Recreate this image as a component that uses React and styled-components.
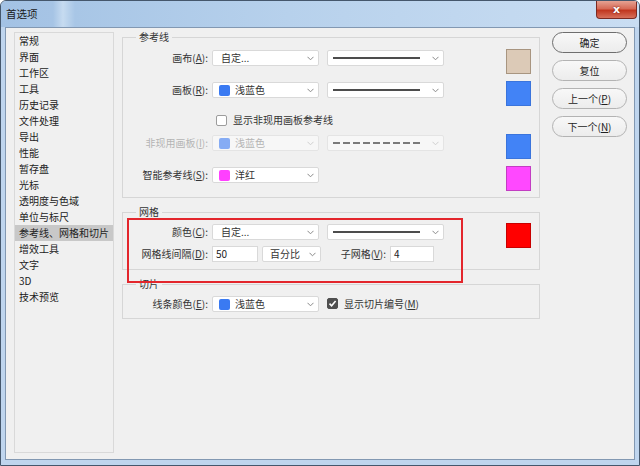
import React from 'react';
import styled, { createGlobalStyle } from 'styled-components';

const Global = createGlobalStyle`
  html, body { margin: 0; padding: 0; background: #fff; }
  body {
    font-family: "Noto Sans CJK SC", "Noto Sans", sans-serif;
    font-size: 10px;
    color: #333;
  }
  * { box-sizing: border-box; }
`;

const Window = styled.div`
  width: 640px;
  height: 466px;
  display: flex;
  flex-direction: column;
  border: 1px solid #45576c;
  border-radius: 6px 6px 0 0;
  background: #bfd5ee;
  overflow: hidden;
`;

const TitleBar = styled.div`
  height: 26px;
  flex: none;
  display: flex;
  justify-content: space-between;
  align-items: flex-start;
  padding: 0 2px 0 5px;
  background: linear-gradient(90deg, #a3c2e4 0, #a6c4e5 52px, #c6dbf0 62px, #a8c6e6 74px, #b7d1ec 45%, #c3d9f0 80%, #c9ddf2 100%);
`;

const Title = styled.div`
  font-size: 10.5px;
  line-height: 26px;
  color: #1a1a1a;
`;

const CloseButton = styled.div`
  width: 41px;
  height: 18px;
  display: flex;
  align-items: center;
  justify-content: center;
  border: 1px solid #7b2a22;
  border-top: none;
  border-radius: 0 0 4px 4px;
  background: linear-gradient(#e6a293 0, #d66a56 45%, #c1361f 55%, #d7705a 100%);
  color: #fff;
  font-family: "DejaVu Sans", sans-serif;
  font-weight: bold;
  font-size: 11px;
  text-shadow: 0 0 2px #6a1a10;
`;

const Frame = styled.div`
  flex: 1;
  display: flex;
  padding: 0 4px 5px;
`;

const Body = styled.div`
  flex: 1;
  display: flex;
  align-items: flex-start;
  background: #f0f0f0;
  border: 1px solid #8298b2;
  padding: 0 6px 6px 8px;
`;

const Sidebar = styled.div`
  align-self: stretch;
  width: 100px;
  margin-top: 4px;
  border: 1px solid #d9d9d9;
  display: flex;
  flex-direction: column;
`;

const NavItem = styled.div`
  height: 16px;
  line-height: 16px;
  padding-left: 4px;
  color: #222;
  background: ${p => (p.$active ? '#c8c8c8' : 'transparent')};
`;

const Main = styled.div`
  position: relative;
  width: 418px;
  margin: 1px 0 0 8px;
  display: flex;
  flex-direction: column;
  gap: 6px;
`;

const Group = styled.fieldset`
  margin: 0;
  min-width: 0;
  border: 1px solid #d6d6d6;
  padding: ${p => p.$pt}px 8px 6px 0;
`;

const Legend = styled.legend`
  margin-left: 13px;
  padding: 0 3px;
  line-height: 16px;
  font-size: 10px;
  color: #333;
`;

const Rows = styled.div`
  display: flex;
  flex-direction: column;
  gap: 7px;
`;

const Row = styled.div`
  display: flex;
  align-items: flex-start;
  height: ${p => p.$h || 16}px;
`;

const Label = styled.div`
  width: ${p => p.$w || 89}px;
  flex: none;
  padding-right: 4px;
  text-align: right;
  line-height: 16px;
  margin-top: ${p => p.$mt || 0}px;
  color: ${p => (p.$disabled ? '#b4b4b4' : '#333')};
  white-space: nowrap;
`;

const U = styled.span`
  text-decoration: underline;
`;

const Select = styled.div`
  width: ${p => p.$w}px;
  height: 16px;
  flex: none;
  margin-top: ${p => p.$mt || 0}px;
  margin-left: ${p => p.$ml || 0}px;
  display: flex;
  align-items: center;
  background: ${p => (p.$disabled ? '#f7f7f7' : '#fff')};
  border: 1px solid ${p => (p.$disabled ? '#e4e4e4' : '#d9d9d9')};
  border-radius: 2px;
  padding: 0 4px 0 ${p => p.$pl ?? 8}px;
  color: ${p => (p.$disabled ? '#b4b4b4' : '#333')};
`;

const SelectText = styled.span`
  flex: 1;
  line-height: 14px;
  white-space: nowrap;
`;

const ColorChip = styled.span`
  width: 11px;
  height: 11px;
  flex: none;
  border-radius: 2px;
  margin-right: 5px;
  background: ${p => p.$c};
  opacity: ${p => (p.$disabled ? 0.6 : 1)};
`;

const LineSample = styled.span`
  flex: 1;
  height: 2px;
  margin-right: 12px;
  background: ${p =>
    p.$dashed
      ? 'repeating-linear-gradient(90deg, #7a7a7a 0 7px, transparent 7px 10px)'
      : '#4d4d4d'};
`;

const Input = styled.div`
  width: ${p => p.$w}px;
  height: 16px;
  flex: none;
  background: #fff;
  border: 1px solid #d9d9d9;
  padding-left: 3px;
  line-height: 14px;
  color: #222;
`;

const Spacer = styled.div`
  flex: 1;
`;

const Swatch = styled.div`
  width: 25px;
  height: 25px;
  flex: none;
  background: ${p => p.$c};
  border: 1px solid ${p => p.$b};
`;

const CheckRow = styled.div`
  display: flex;
  align-items: center;
  height: 14px;
  padding-left: 93px;
`;

const Box = styled.span`
  width: 11px;
  height: 11px;
  flex: none;
  border-radius: 2px;
  display: flex;
  align-items: center;
  justify-content: center;
  background: ${p => (p.$checked ? '#4f4f4f' : '#fff')};
  border: 1px solid ${p => (p.$checked ? '#4f4f4f' : '#9c9c9c')};
  margin-left: ${p => p.$ml || 0}px;
`;

const CheckText = styled.span`
  margin-left: 6px;
  line-height: 16px;
  color: #333;
  white-space: nowrap;
`;

const Highlight = styled.div`
  position: absolute;
  left: 5px;
  top: 189px;
  width: 336px;
  height: 65px;
  border: 2px solid #e3262c;
  pointer-events: none;
`;

const ButtonCol = styled.div`
  width: 75px;
  margin: 4px 0 0 12px;
  display: flex;
  flex-direction: column;
  gap: 7px;
`;

const Button = styled.div`
  height: 21px;
  border-radius: 11px;
  border: 1px solid ${p => (p.$default ? '#6e6e6e' : '#b3b3b3')};
  background: linear-gradient(#f8f8f8, #ececec);
  display: flex;
  align-items: center;
  justify-content: center;
  color: #222;
  font-size: 10px;
`;

const Chevron = ({ light }) => (
  <svg width="7" height="5" viewBox="0 0 7 5" style={{ flex: 'none' }}>
    <polyline points="0.5,0.8 3.5,3.8 6.5,0.8" fill="none" stroke={light ? '#cfcfcf' : '#8a8a8a'} strokeWidth="1" />
  </svg>
);

const Check = () => (
  <svg width="9" height="9" viewBox="0 0 9 9">
    <polyline points="1.5,4.6 3.6,6.7 7.6,2" fill="none" stroke="#fff" strokeWidth="1.6" />
  </svg>
);

const Dropdown = ({ w, text, chip, disabled, pl, ml, mt }) => (
  <Select $w={w} $disabled={disabled} $pl={chip ? 6 : pl} $ml={ml} $mt={mt}>
    {chip && <ColorChip $c={chip} $disabled={disabled} />}
    <SelectText>{text}</SelectText>
    <Chevron light={disabled} />
  </Select>
);

const LineDropdown = ({ dashed, disabled, mt }) => (
  <Select $w={117} $ml={8} $pl={5} $mt={mt} $disabled={disabled}>
    <LineSample $dashed={dashed} />
    <Chevron light={disabled} />
  </Select>
);

const navItems = [
  '常规', '界面', '工作区', '工具', '历史记录', '文件处理', '导出', '性能', '暂存盘',
  '光标', '透明度与色域', '单位与标尺', '参考线、网格和切片', '增效工具', '文字', '3D', '技术预览',
];

export default function App() {
  return (
    <>
      <Global />
      <Window>
        <TitleBar>
          <Title>首选项</Title>
          <CloseButton>x</CloseButton>
        </TitleBar>
        <Frame>
          <Body>
            <Sidebar>
              {navItems.map(n => (
                <NavItem key={n} $active={n === '参考线、网格和切片'}>{n}</NavItem>
              ))}
            </Sidebar>

            <Main>
              <Group $pt={4}>
                <Legend>参考线</Legend>
                <Rows>
                  <Row $h={25}>
                    <Label $mt={1}>画布(<U>A</U>):</Label>
                    <Dropdown w={107} mt={1} text="自定..." />
                    <LineDropdown mt={1} />
                    <Spacer />
                    <Swatch $c="#dccab7" $b="#a89580" />
                  </Row>
                  <Row $h={25}>
                    <Label $mt={1}>画板(<U>R</U>):</Label>
                    <Dropdown w={107} mt={1} chip="#3a7af2" text="浅蓝色" />
                    <LineDropdown mt={1} />
                    <Spacer />
                    <Swatch $c="#4283f6" $b="#3a74dc" />
                  </Row>
                  <CheckRow>
                    <Box />
                    <CheckText>显示非现用画板参考线</CheckText>
                  </CheckRow>
                  <Row $h={25}>
                    <Label $mt={1} $disabled>非现用画板(<U>I</U>):</Label>
                    <Dropdown w={107} mt={1} chip="#3a7af2" text="浅蓝色" disabled />
                    <LineDropdown mt={1} dashed disabled />
                    <Spacer />
                    <Swatch $c="#4283f6" $b="#3a74dc" />
                  </Row>
                  <Row $h={25}>
                    <Label $mt={1}>智能参考线(<U>S</U>):</Label>
                    <Dropdown w={107} mt={1} chip="#ff40ff" text="洋红" />
                    <Spacer />
                    <Swatch $c="#ff48ff" $b="#c23ec2" />
                  </Row>
                </Rows>
              </Group>

              <Group $pt={3}>
                <Legend>网格</Legend>
                <Row $h={40}>
                  <Rows>
                    <Row>
                      <Label $mt={1}>颜色(<U>C</U>):</Label>
                      <Dropdown w={107} mt={1} text="自定..." />
                      <LineDropdown mt={1} />
                    </Row>
                    <Row>
                      <Label>网格线间隔(<U>D</U>):</Label>
                      <Input $w={46}>50</Input>
                      <Dropdown w={59} ml={4} pl={7} text="百分比" />
                      <Label $w={69}>子网格(<U>V</U>):</Label>
                      <Input $w={44}>4</Input>
                    </Row>
                  </Rows>
                  <Spacer />
                  <Swatch $c="#ff0000" $b="#c80000" />
                </Row>
              </Group>

              <Group $pt={4}>
                <Legend>切片</Legend>
                <Row>
                  <Label>线条颜色(<U>E</U>):</Label>
                  <Dropdown w={107} chip="#3a7af2" text="浅蓝色" />
                  <Box $checked $ml={8} style={{ marginTop: 2 }}>
                    <Check />
                  </Box>
                  <CheckText>显示切片编号(<U>M</U>)</CheckText>
                </Row>
              </Group>

              <Highlight />
            </Main>

            <ButtonCol>
              <Button $default>确定</Button>
              <Button>复位</Button>
              <Button>上一个(<U>P</U>)</Button>
              <Button>下一个(<U>N</U>)</Button>
            </ButtonCol>
          </Body>
        </Frame>
      </Window>
    </>
  );
}
